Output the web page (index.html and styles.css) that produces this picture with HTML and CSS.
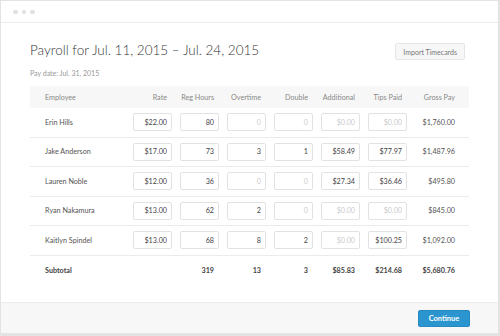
FILE: index.html
```html
<!DOCTYPE html>
<html lang="en">
<head>
    <meta charset="UTF-8">
    <title>Payroll</title>
    <link rel="stylesheet" href="styles.css">
</head>
<body>
    <div class="window">
        <!-- window chrome -->
        <div class="titlebar">
            <span class="dot"></span><span class="dot"></span><span class="dot"></span>
        </div>

        <div class="content">
            <div class="head">
                <h1>Payroll for Jul. 11, 2015 – Jul. 24, 2015</h1>
                <button class="btn-import">Import Timecards</button>
            </div>
            <p class="paydate">Pay date: Jul. 31, 2015</p>

            <div class="payroll">
                <div class="row row-head">
                    <div class="name">Employee</div>
                    <div class="num">Rate</div>
                    <div class="num">Reg Hours</div>
                    <div class="num">Overtime</div>
                    <div class="num">Double</div>
                    <div class="num">Additional</div>
                    <div class="num">Tips Paid</div>
                    <div class="gross">Gross Pay</div>
                </div>
                <div id="rows"></div>
                <div class="row row-total">
                    <div class="name">Subtotal</div>
                    <div class="num"></div>
                    <div class="num">319</div>
                    <div class="num">13</div>
                    <div class="num">3</div>
                    <div class="num">$85.83</div>
                    <div class="num">$214.68</div>
                    <div class="gross">$5,680.76</div>
                </div>
            </div>
        </div>

        <div class="footer">
            <button class="btn-continue">Continue</button>
        </div>
    </div>

    <script>
        // employee rows: name, rate, reg, overtime, double, additional, tips, gross
        const employees = [
            ['Erin Hills', '$22.00', '80', '', '', '', '', '$1,760.00'],
            ['Jake Anderson', '$17.00', '73', '3', '1', '$58.49', '$77.97', '$1,487.96'],
            ['Lauren Noble', '$12.00', '36', '', '', '$27.34', '$36.46', '$495.80'],
            ['Ryan Nakamura', '$13.00', '62', '2', '', '', '', '$845.00'],
            ['Kaitlyn Spindel', '$13.00', '68', '8', '2', '', '$100.25', '$1,092.00']
        ];
        const placeholders = ['', '$0.00', '0', '0', '0', '$0.00', '$0.00'];

        const rows = document.getElementById('rows');
        employees.forEach(emp => {
            const row = document.createElement('div');
            row.className = 'row';
            let html = `<div class="name">${emp[0]}</div>`;
            for (let i = 1; i <= 6; i++) {
                html += `<div class="num"><input class="cell" value="${emp[i]}" placeholder="${placeholders[i]}"></div>`;
            }
            html += `<div class="gross">${emp[7]}</div>`;
            row.innerHTML = html;
            rows.appendChild(row);
        });
    </script>
</body>
</html>
```
FILE: styles.css
```css
* {
    margin: 0;
    padding: 0;
    box-sizing: border-box;
}

body {
    font-family: Lato, "Liberation Sans", sans-serif;
    color: #555;
    background: #fff;
}

.window {
    width: 500px;
    height: 336px;
    display: flex;
    flex-direction: column;
    border: 1px solid #e3e3e3;
    border-right-width: 2px;
    border-bottom-width: 3px;
    background: #fff;
}

/* 窗口标题栏 */
.titlebar {
    height: 22px;
    border-bottom: 1px solid #ececec;
    display: flex;
    align-items: center;
    gap: 4px;
    padding-left: 12px;
    padding-top: 1px;
}

.dot {
    width: 4.5px;
    height: 4.5px;
    border-radius: 50%;
    background: #e0e0e0;
}

.content {
    padding: 17px 29px 0 29px;
}

.head {
    display: flex;
    justify-content: space-between;
    align-items: center;
    padding-right: 4px;
}

h1 {
    font-size: 13.5px;
    line-height: 17px;
    font-weight: 300;
    color: #333;
}

.btn-import {
    font-family: inherit;
    font-size: 7px;
    color: #777;
    background: #f7f7f7;
    border: 1px solid #e6e6e6;
    border-radius: 2px;
    height: 17px;
    padding: 0 7px;
    margin-top: 3px;
}

.paydate {
    font-size: 7px;
    color: #999;
    margin-top: 8px;
    line-height: 10px;
}

/* 表格 */
.payroll {
    margin-top: 8px;
}

.row {
    display: grid;
    grid-template-columns: 95px repeat(6, 39px) 55px;
    column-gap: 8px;
    align-items: center;
    height: 29.5px;
    border-bottom: 1px solid #ebebeb;
    font-size: 7.2px;
}

.row-head {
    height: 22px;
    background: #f7f7f7;
    border-bottom: none;
    color: #888;
}

.row-total {
    border-bottom: none;
    font-weight: 700;
    color: #444;
    height: 29px;
}

.name {
    padding-left: 15px;
}

.num {
    text-align: right;
    padding-right: 5px;
}

.num:has(.cell) {
    padding-right: 0;
}

.gross {
    text-align: right;
    padding-right: 15px;
}

.cell {
    width: 39px;
    height: 18px;
    border: 1px solid #e2e2e2;
    border-radius: 2px;
    font-family: inherit;
    font-size: 7.2px;
    color: #444;
    text-align: right;
    padding-right: 4px;
    outline: none;
}

.cell::placeholder {
    color: #cacaca;
}

.footer {
    margin-top: auto;
    height: 31px;
    background: #f7f7f7;
    border-top: 1px solid #ececec;
    display: flex;
    justify-content: flex-end;
    align-items: center;
    padding-right: 28px;
}

.btn-continue {
    font-family: inherit;
    font-size: 7.5px;
    font-weight: 700;
    color: #fff;
    background: #2b95d0;
    border: 1px solid #2889c0;
    border-radius: 2px;
    width: 52px;
    height: 17px;
}
```
